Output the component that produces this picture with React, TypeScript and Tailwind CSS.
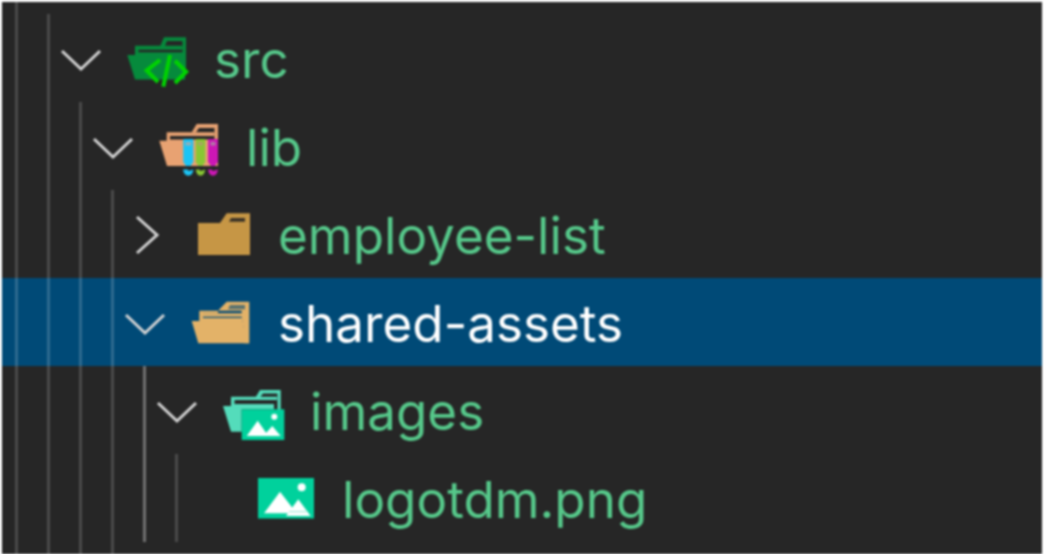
import type { ReactNode } from "react";

function Chevron({ open }: { open: boolean }) {
  return (
    <svg width="42" height="42" viewBox="0 0 42 42" fill="none" className="block">
      {open ? (
        <path d="M2 12 L21 30 L40 12" stroke="#d4d4d4" strokeWidth="3" />
      ) : (
        <path d="M13 2 L33 20 L13 38" stroke="#d4d4d4" strokeWidth="3" />
      )}
    </svg>
  );
}

function LogoIcon() {
  return (
    <svg width="56" height="44" viewBox="0 0 56 44" className="block">
      <rect x="0" y="0" width="56" height="40.5" fill="#00d19c" />
      <circle cx="43.7" cy="9.3" r="4" fill="#fff" />
      <path d="M6 35.3 L22 13.7 L38.7 35.3 Z" fill="#fff" />
      <path d="M28 38 L40.3 21.3 L52.7 38 Z" fill="#fff" />
      <path d="M31 33.6 H50" stroke="#a8ecd9" strokeWidth="1.3" />
    </svg>
  );
}

function SrcIcon() {
  return (
    <svg width="62" height="56" viewBox="0 0 62 56" className="block">
      <path d="M33 14.7 L37 5.3 H59 V36 H55.5 V9 H40 L37.5 14.7 Z" fill="#068a3c" />
      <path d="M8 13.7 H55.5 V17.7 H11.5 V20.3 H58 V47.5 H8 L0.3 23 H8 Z" fill="#068a3c" />
      <path d="M33 28 L19.7 38.5 L31 50" fill="none" stroke="#00d400" strokeWidth="4" />
      <path d="M48 28.7 L59.2 39.7 L48 51" fill="none" stroke="#00d400" strokeWidth="4" />
      <path d="M43 23 L36.3 54.7" fill="none" stroke="#00d400" strokeWidth="4" />
    </svg>
  );
}

function LibIcon() {
  return (
    <svg width="62" height="58" viewBox="0 0 62 58" className="block">
      <path d="M32.7 13.3 L37.7 5 H59 V21.7 H55.5 V9 H40 L37 13.3 Z" fill="#e8a272" />
      <path d="M7.7 13.3 H55.5 V17 H11 V20.5 H59 V47 H8 L0.3 21.7 H7.7 Z" fill="#e8a272" />
      <path d="M24.3 20 H34.3 V43 L31.5 47 H27 L24.3 43 Z" fill="#1cc4f5" />
      <path d="M36.7 20 H46.3 V43 L43.5 47 H39.5 L36.7 43 Z" fill="#88c634" />
      <path d="M49 20 H59 V43 L56 47 H52 L49 43 Z" fill="#cc17b5" />
      <rect x="26.5" y="23" width="5.5" height="3.5" fill="#8fb0bb" />
      <rect x="39" y="23" width="5" height="3.5" fill="#a5a860" />
      <rect x="51.5" y="23" width="5" height="3.5" fill="#b07aa6" />
      <path d="M24 50.5 H29 L29.5 52 L34.5 50.5 Q33.5 56.7 29.3 56.7 Q25 56.7 24 50.5 Z" fill="#1cc4f5" />
      <path d="M36.7 50.5 H40.5 L41.5 52 L46.3 50.5 Q45.3 56.7 41.5 56.7 Q37.7 56.7 36.7 50.5 Z" fill="#88c634" />
      <path d="M49 50.5 H52.5 L54 52 L59 50.5 Q58 56.7 54 56.7 Q50 56.7 49 50.5 Z" fill="#cc17b5" />
    </svg>
  );
}

function ClosedFolder() {
  return (
    <svg width="52" height="46" viewBox="0 0 52 46" className="block">
      <path d="M0 10 H22 L28.7 0.3 H52 V42 H0 Z" fill="#c69645" />
      <path d="M33 5 H47 V8.7 H31 Z" fill="#3a3226" />
    </svg>
  );
}

function OpenFolder() {
  return (
    <svg width="59" height="46" viewBox="0 0 59 46" className="block">
      <path d="M27 9.7 L35.7 0.7 H58.3 V42.3 H53 V30 L50.7 15.7 H12 V12.3 H50.7 V9.7 Z" fill="#e3b268" />
      <path d="M39 4 H54 V8.3 H37 Z" fill="#004a77" opacity="0.6" />
      <path d="M8.3 9.7 H27 V12.3 H12 V17 H51 L53.5 30 L58.3 42.3 H7.3 L0.7 20 H8.3 Z" fill="#e3b268" />
    </svg>
  );
}

function ImagesFolder() {
  return (
    <svg width="62" height="56" viewBox="0 0 62 56" className="block">
      <path d="M32.7 13.3 L37 6 H57.7 V26 H54.5 V9.5 H40 L37.2 13.3 Z" fill="#54dcbb" />
      <path d="M8 12.7 H54 V16 H11.5 V20 H51 V25.3 H18.7 V47.7 H8 L0 22 H8 Z" fill="#54dcbb" />
      <rect x="18.7" y="25.3" width="42.6" height="30.7" fill="#00d19c" />
      <circle cx="51.3" cy="32.7" r="3" fill="#fff" />
      <path d="M23.7 52 L34.7 36.7 L45.3 52 Z" fill="#fff" />
      <path d="M40.3 52 L49.3 42 L57.7 52 Z" fill="#fff" />
    </svg>
  );
}

type Row = {
  label: string;
  guides: number[];
  chevron?: "open" | "closed";
  icon: ReactNode;
  iconClass: string;
  selected?: boolean;
};

const rows: Row[] = [
  { label: "src", guides: [0, 0], chevron: "open", icon: <SrcIcon />, iconClass: "" },
  { label: "lib", guides: [0, 0, 0], chevron: "open", icon: <LibIcon />, iconClass: "" },
  { label: "employee-list", guides: [0, 0, 0, 0], chevron: "closed", icon: <ClosedFolder />, iconClass: "pl-[7px]" },
  { label: "shared-assets", guides: [0, 0, 0, 0], chevron: "open", icon: <OpenFolder />, iconClass: "", selected: true },
  { label: "images", guides: [0, 0, 0, 0, 1], chevron: "open", icon: <ImagesFolder />, iconClass: "" },
  { label: "logotdm.png", guides: [0, 0, 0, 0, 1, 0], icon: <LogoIcon />, iconClass: "pl-[3px]" },
];

function Guides({ guides, over }: { guides: number[]; over?: boolean }) {
  return (
    <>
      {guides.map((g, i) => (
        <div key={i} className="w-[32px] h-full shrink-0 pl-[13px]">
          <div className={"h-full w-[3px] " + (g ? "bg-[#707070]" : over ? "bg-[#ffffff2e]" : "bg-[#4a4a4a]")} />
        </div>
      ))}
    </>
  );
}

export default function App() {
  return (
    <div className="w-[1046px] h-[554px] bg-white pl-[2px] pt-[2px] pr-[4px] overflow-hidden">
      <div className="w-full h-full bg-[#262626] flex flex-col overflow-hidden blur-[0.8px] font-['Inter','Liberation_Sans',sans-serif]">
        <div className="h-[12px] shrink-0 flex">
          <Guides guides={[0]} />
        </div>
        {rows.map((r) => (
          <div
            key={r.label}
            className={
              "h-[88px] shrink-0 " + (r.selected ? "bg-[#004a77] text-white" : "text-[#56c88a]")
            }
          >
            <div className="h-full flex">
              <Guides guides={r.guides} over={r.selected} />
              <div className="flex-1 flex items-center pt-[3px]">
                <div className="w-[67px] -ml-[6px] shrink-0">
                  {r.chevron && <Chevron open={r.chevron === "open"} />}
                </div>
                <div className={"w-[87px] shrink-0 " + r.iconClass}>{r.icon}</div>
                <span className="text-[51.2px] leading-none whitespace-nowrap">{r.label}</span>
              </div>
            </div>
          </div>
        ))}
        <div className="h-[12px] shrink-0 flex">
          <Guides guides={[0, 0, 0, 0]} />
        </div>
      </div>
    </div>
  );
}
